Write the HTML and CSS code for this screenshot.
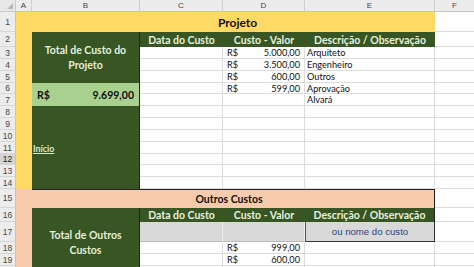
FILE: index.html
```html
<!DOCTYPE html>
<html lang="pt">
<head>
<meta charset="utf-8">
<title>Projeto</title>
<link rel="stylesheet" href="styles.css">
</head>
<body>
<div class="sheet">
  <!-- column headers -->
  <div class="corner"><span class="tri"></span></div>
  <div class="ch">A</div><div class="ch">B</div><div class="ch">C</div><div class="ch">D</div><div class="ch">E</div><div class="ch">F</div>

  <!-- row 1 -->
  <div class="rh">1</div>
  <div class="yel"></div>
  <div class="yel span4 title-proj">Projeto</div>
  <div class="c"></div>

  <!-- row 2 -->
  <div class="rh">2</div>
  <div class="yel rspan13"></div>
  <div class="dark rspan4 total"><span>Total de Custo do Projeto</span></div>
  <div class="hdr">Data do Custo</div><div class="hdr">Custo - Valor</div><div class="hdr">Descrição / Observação</div>
  <div class="c"></div>

  <!-- row 3 -->
  <div class="rh">3</div>
  <div class="c"></div><div class="c money"><span>R$</span><span>5.000,00</span></div><div class="c txt">Arquiteto</div><div class="c"></div>
  <!-- row 4 -->
  <div class="rh">4</div>
  <div class="c"></div><div class="c money"><span>R$</span><span>3.500,00</span></div><div class="c txt">Engenheiro</div><div class="c"></div>
  <!-- row 5 -->
  <div class="rh">5</div>
  <div class="c"></div><div class="c money"><span>R$</span><span>600,00</span></div><div class="c txt">Outros</div><div class="c"></div>
  <!-- row 6 -->
  <div class="rh">6</div>
  <div class="light rspan2 sum"><span>R$</span><span>9.699,00</span></div>
  <div class="c"></div><div class="c money"><span>R$</span><span>599,00</span></div><div class="c txt">Aprovação</div><div class="c"></div>
  <!-- row 7 -->
  <div class="rh">7</div>
  <div class="c"></div><div class="c"></div><div class="c txt">Alvará</div><div class="c"></div>
  <!-- row 8 -->
  <div class="rh">8</div>
  <div class="dark rspan3"></div>
  <div class="c"></div><div class="c"></div><div class="c"></div><div class="c"></div>
  <!-- row 9 -->
  <div class="rh">9</div>
  <div class="c"></div><div class="c"></div><div class="c"></div><div class="c"></div>
  <!-- row 10 -->
  <div class="rh">10</div>
  <div class="c"></div><div class="c"></div><div class="c"></div><div class="c"></div>
  <!-- row 11 -->
  <div class="rh">11</div>
  <div class="dark link"><a href="#">Início</a></div>
  <div class="c"></div><div class="c"></div><div class="c"></div><div class="c"></div>
  <!-- row 12 -->
  <div class="rh sel">12</div>
  <div class="dark rspan3"></div>
  <div class="c"></div><div class="c"></div><div class="c"></div><div class="c"></div>
  <!-- row 13 -->
  <div class="rh">13</div>
  <div class="c"></div><div class="c"></div><div class="c"></div><div class="c"></div>
  <!-- row 14 -->
  <div class="rh">14</div>
  <div class="c"></div><div class="c"></div><div class="c"></div><div class="c"></div>

  <!-- row 15 -->
  <div class="rh">15</div>
  <div class="peach rspan6"></div>
  <div class="peach span4 title-out">Outros Custos</div>
  <div class="c"></div>
  <!-- row 16 -->
  <div class="rh">16</div>
  <div class="dark rspan5 total"><span>Total de Outros Custos</span></div>
  <div class="hdr">Data do Custo</div><div class="hdr">Custo - Valor</div><div class="hdr hdr-end">Descrição / Observação</div>
  <div class="c"></div>
  <!-- row 17 -->
  <div class="rh">17</div>
  <div class="grey"></div><div class="grey"></div><div class="grey name">ou nome do custo</div>
  <div class="c"></div>
  <!-- row 18 -->
  <div class="rh">18</div>
  <div class="c"></div><div class="c money"><span>R$</span><span>999,00</span></div><div class="c"></div><div class="c"></div>
  <!-- row 19 -->
  <div class="rh">19</div>
  <div class="c"></div><div class="c money"><span>R$</span><span>600,00</span></div><div class="c"></div><div class="c"></div>
  <!-- row 20 -->
  <div class="rh"></div>
  <div class="c"></div><div class="c"></div><div class="c"></div><div class="c"></div>
</div>
</body>
</html>
```

FILE: styles.css
```css
* { box-sizing: border-box; }
html, body {
  margin: 0;
  padding: 0;
  background: #ffffff;
  overflow: hidden;
}
body {
  width: 474px;
  height: 267px;
  font-family: Lato, "Open Sans", sans-serif;
}
.sheet {
  display: grid;
  grid-template-columns: 16px 16px 108px 83px 82px 130px 40px;
  grid-template-rows: 12px 20px 15px 12px 12px 12px 11px 12px 12px 12px 12px 12px 11px 12px 12px 19px 14px 20px 12px 12px 12px;
  width: 475px;
}
.corner {
  background: #e8e8e8;
  border-right: 1px solid #c8c8c8;
  border-bottom: 1px solid #c8c8c8;
  position: relative;
}
.tri {
  position: absolute;
  right: 2px;
  bottom: 2px;
  width: 0;
  height: 0;
  border-left: 6px solid transparent;
  border-bottom: 6px solid #b8b8b8;
}
.ch {
  background: #ececec;
  border-right: 1px solid #cfcfcf;
  border-bottom: 1px solid #c4c4c4;
  color: #444;
  font-family: "Liberation Sans", sans-serif;
  font-size: 8px;
  display: flex;
  align-items: center;
  justify-content: center;
}
.rh {
  background: #ececec;
  border-right: 1px solid #c4c4c4;
  border-bottom: 1px solid #d6d6d6;
  color: #444;
  font-family: "Liberation Sans", sans-serif;
  font-size: 8.5px;
  display: flex;
  align-items: center;
  justify-content: center;
}
.rh.sel {
  background: #d4d4d4;
  color: #222;
}
.c {
  border-right: 1px solid #dcdcdc;
  border-bottom: 1px solid #dcdcdc;
  font-size: 9.2px;
  color: #111;
  display: flex;
  align-items: center;
  white-space: nowrap;
}
.txt { padding-left: 2px; }
.money {
  justify-content: space-between;
  padding: 0 4px 0 4px;
}
.span4 { grid-column: span 4; }
.rspan2 { grid-row: span 2; }
.rspan3 { grid-row: span 3; }
.rspan4 { grid-row: span 4; }
.rspan5 { grid-row: span 5; }
.rspan6 { grid-row: span 6; }
.rspan13 { grid-row: span 13; }

.yel { background: #ffd966; }
.peach { background: #f8cbad; }
.title-proj {
  display: flex;
  align-items: center;
  justify-content: center;
  font-weight: 700;
  font-size: 12px;
  color: #111;
  padding-left: 8px;
}
.title-out {
  display: flex;
  align-items: center;
  justify-content: center;
  font-weight: 700;
  font-size: 10.5px;
  color: #111;
  padding-right: 8px;
  border-top: 1px solid #222;
  border-right: 1px solid #222;
}
.dark {
  background: #375623;
  border-right: 1px solid #1d2b13;
}
.total {
  display: flex;
  align-items: center;
  justify-content: center;
  text-align: center;
  color: #e4efdc;
  font-weight: 700;
  font-size: 10.5px;
  line-height: 15px;
  padding: 0 10px;
}
.light {
  background: #a9d08e;
  display: flex;
  align-items: center;
  justify-content: space-between;
  padding: 0 5px 0 5px;
  font-weight: 700;
  font-size: 10.5px;
  color: #111;
  border-right: 1px solid #1d2b13;
}
.link {
  display: flex;
  align-items: center;
  padding-left: 1px;
}
.link a {
  color: #dbe9d0;
  font-weight: 700;
  font-size: 8.8px;
  text-decoration: underline;
}
.hdr {
  background: #375623;
  color: #e6f0df;
  font-weight: 700;
  font-size: 10.5px;
  display: flex;
  align-items: center;
  justify-content: center;
  white-space: nowrap;
}
.hdr-end { border-right: 1px solid #222; }
.grey {
  background: #d9d9d9;
  border-right: 1px solid #efefef;
  border-bottom: 1px solid #bdbdbd;
}
.name {
  display: flex;
  align-items: center;
  justify-content: center;
  font-family: "Liberation Sans", sans-serif;
  font-size: 9.6px;
  color: #2a4282;
  border-left: 1px solid #555;
  border-right: 1px solid #333;
  border-bottom: 1px solid #333;
}
```
